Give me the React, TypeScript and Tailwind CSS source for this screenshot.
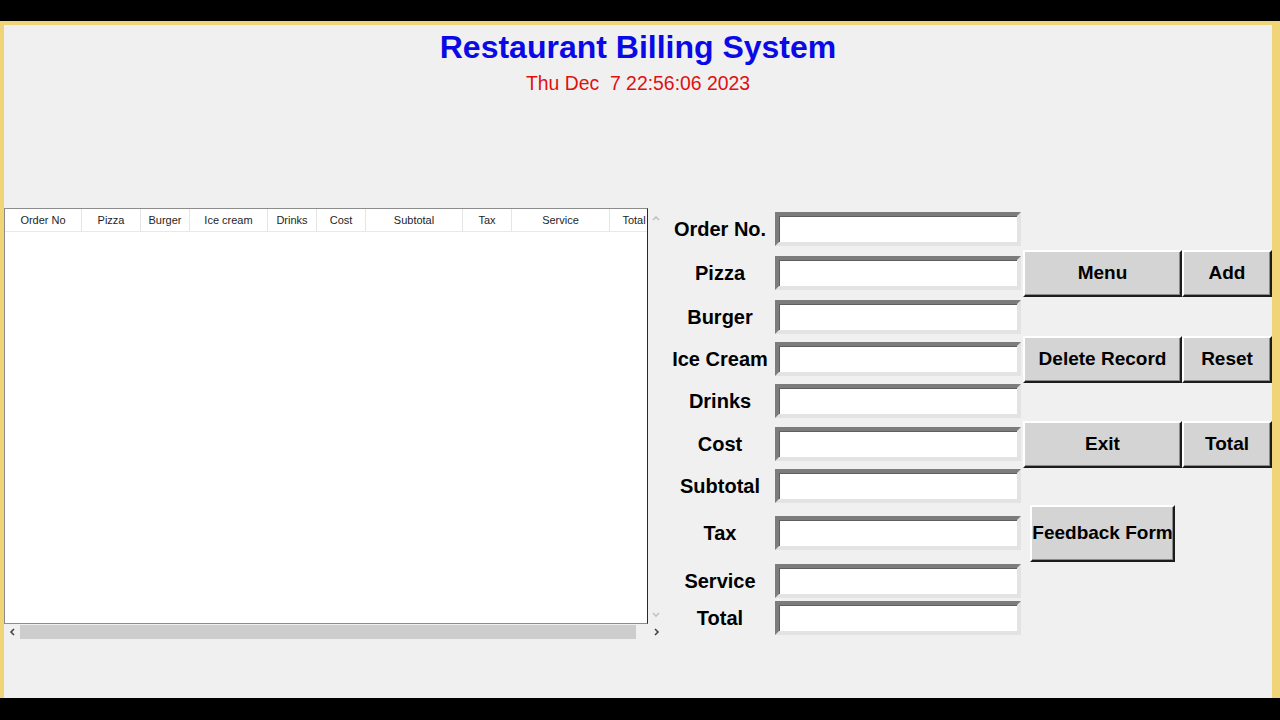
import type { ReactNode } from 'react';

const columns = [
  { name: 'Order No', w: 'w-[77px]' },
  { name: 'Pizza', w: 'w-[59px]' },
  { name: 'Burger', w: 'w-[49px]' },
  { name: 'Ice cream', w: 'w-[78px]' },
  { name: 'Drinks', w: 'w-[49px]' },
  { name: 'Cost', w: 'w-[49px]' },
  { name: 'Subtotal', w: 'w-[97px]' },
  { name: 'Tax', w: 'w-[49px]' },
  { name: 'Service', w: 'w-[98px]' },
  { name: 'Total', w: 'w-[49px]' },
];

function Chevron({ dir, light }: { dir: 'up' | 'down' | 'left' | 'right'; light?: boolean }) {
  const points = {
    up: '2,7 5,4 8,7',
    down: '2,4 5,7 8,4',
    left: '7,2 4,5 7,8',
    right: '4,2 7,5 4,8',
  }[dir];
  return (
    <svg width="10" height="10" viewBox="0 0 10 10">
      <polyline points={points} fill="none" stroke={light ? '#c2c2c2' : '#444'} strokeWidth="1.6" />
    </svg>
  );
}

function Field() {
  return (
    <div className="ml-[3px] w-[246px] h-[34px] bg-white border-4 border-t-[#7c7c7c] border-l-[#7c7c7c] border-b-[#e3e3e3] border-r-[#e3e3e3] shadow-[inset_1px_1px_0_#5f5f5f]" />
  );
}

function TkButton({ children, className }: { children: ReactNode; className: string }) {
  return (
    <button
      className={`${className} bg-[#d4d4d4] border-2 border-t-white border-l-white border-b-[#1c1c1c] border-r-[#1c1c1c] shadow-[inset_-1px_-1px_0_#8a8a8a] text-[19px] font-bold text-black flex items-center justify-center whitespace-nowrap`}
    >
      {children}
    </button>
  );
}

function Row({ label, className, children }: { label: string; className: string; children?: ReactNode }) {
  return (
    <div className={`flex items-center ${className}`}>
      <div className="w-[104px] text-center text-[20px] font-bold text-black whitespace-nowrap">{label}</div>
      <Field />
      {children}
    </div>
  );
}

function BillTable() {
  return (
    <div className="w-[660px] flex flex-col">
      <div className="flex h-[416px]">
        <div className="w-[644px] bg-white border-t border-l border-b border-[#8c8c8c] border-r border-r-[#2a2a2a] overflow-hidden">
          <div className="flex h-[23px] border-b border-[#e8e8e8] text-[11px] text-[#1e1e1e]">
            {columns.map((c) => (
              <div
                key={c.name}
                className={`${c.w} shrink-0 flex items-center justify-center border-r border-[#e5e5e5] whitespace-nowrap`}
              >
                {c.name}
              </div>
            ))}
          </div>
        </div>
        <div className="w-[16px] flex flex-col justify-between items-center py-[5px]">
          <Chevron dir="up" light />
          <Chevron dir="down" light />
        </div>
      </div>
      <div className="flex h-[16px] items-center">
        <div className="w-[16px] flex justify-center">
          <Chevron dir="left" />
        </div>
        <div className="w-[616px] h-[14px] bg-[#cdcdcd]" />
        <div className="w-[12px]" />
        <div className="w-[16px] flex justify-center">
          <Chevron dir="right" />
        </div>
      </div>
    </div>
  );
}

export default function App() {
  return (
    <div className="w-[1280px] h-[720px] bg-black flex flex-col font-['Liberation_Sans',Arial,sans-serif]">
      <div className="h-[21px] shrink-0" />
      <div className="h-[677px] shrink-0 border-t-4 border-l-4 border-r-8 border-[#efd577] bg-[#f0f0f0] flex flex-col overflow-hidden">
        <div className="flex flex-col items-center">
          <h1 className="mt-[4px] text-[32px] leading-[37px] font-bold text-[#0a0ae6]">Restaurant Billing System</h1>
          <p className="mt-[5px] text-[19.4px] leading-[24px] text-[#e01010] whitespace-pre">Thu Dec  7 22:56:06 2023</p>
        </div>

        <div className="flex items-start mt-[113px]">
          <BillTable />

          <div className="ml-[4px] mt-[3px] flex flex-col">
            <Row label="Order No." className="h-[36px]" />
            <Row label="Pizza" className="h-[48px] mt-[2px]">
              <TkButton className="ml-[2px] w-[159px] h-[47px]">Menu</TkButton>
              <TkButton className="w-[90px] h-[47px]">Add</TkButton>
            </Row>
            <Row label="Burger" className="h-[36px] mt-[2px]" />
            <Row label="Ice Cream" className="h-[48px]">
              <TkButton className="ml-[2px] w-[159px] h-[47px]">Delete Record</TkButton>
              <TkButton className="w-[90px] h-[47px]">Reset</TkButton>
            </Row>
            <Row label="Drinks" className="h-[36px]" />
            <Row label="Cost" className="h-[48px] mt-[1px]">
              <TkButton className="ml-[2px] w-[159px] h-[47px]">Exit</TkButton>
              <TkButton className="w-[90px] h-[47px]">Total</TkButton>
            </Row>
            <Row label="Subtotal" className="h-[36px]" />
            <Row label="Tax" className="h-[58px]">
              <TkButton className="ml-[9px] w-[145px] h-[57px]">Feedback Form</TkButton>
            </Row>
            <Row label="Service" className="h-[36px] mt-[1px]" />
            <Row label="Total" className="h-[36px] mt-[1px]" />
          </div>
        </div>
      </div>
      <div className="flex-1" />
    </div>
  );
}
